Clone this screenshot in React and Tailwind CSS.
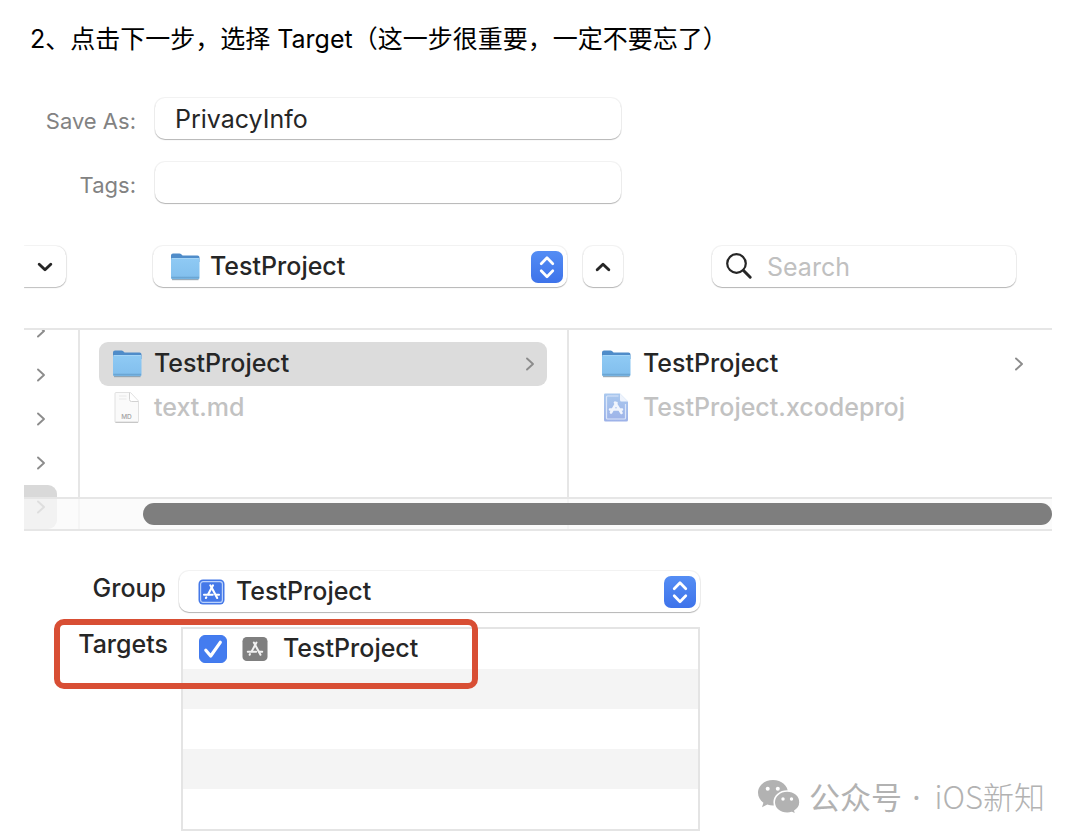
import React, { useState } from "react";

const CONTROL =
  "h-[41px] rounded-[10px] bg-white shadow-[0_0_0_1px_rgba(0,0,0,0.05),0_1px_1px_rgba(0,0,0,0.25)] outline-none";

function FolderIcon() {
  return (
    <svg width="32" height="32" viewBox="0 0 32 32" className="shrink-0" aria-hidden="true">
      <defs>
        <linearGradient id="folderFront" x1="0" y1="0" x2="0" y2="1">
          <stop offset="0" stopColor="#8fcaf4" />
          <stop offset="0.85" stopColor="#83c0ee" />
          <stop offset="1" stopColor="#70acd9" />
        </linearGradient>
      </defs>
      <path d="M2 4.500Q2 2.500 4 2.500h6.500q1 0 1.800 .8l.7 .6q.5 .5 1.400 .5H28.500q2 0 2 2V11H2z" fill="#4f8cc9" />
      <rect x="2" y="7" width="28.500" height="21.500" rx="1.800" fill="url(#folderFront)" />
      <path d="M2.500 7.500h27.500" stroke="#a9d8f8" strokeWidth="0.800" />
      <path d="M2.500 26.300h27.500" stroke="#629cc9" strokeWidth="0.800" />
      <path d="M3 28.700h26.500" stroke="#8b9aa6" strokeWidth="0.900" />
    </svg>
  );
}

function AppGlyph({ stroke = "#fff" }) {
  return (
    <g fill="none" stroke={stroke} strokeWidth="2.100" strokeLinecap="round">
      <path d="M12.300 6.300l1.700 3 5.200 9.700" />
      <path d="M15 6.300l-4.800 8.900" />
      <path d="M6 15.800h8.700M18 15.800h3" />
      <path d="M8.300 18.300l-.4 .7" />
    </g>
  );
}

function ProjectIcon() {
  return (
    <svg width="27" height="26" viewBox="0 0 27 26" className="shrink-0" aria-hidden="true">
      <rect x="0.500" y="0.500" width="26" height="25" rx="4.500" fill="#4478e8" />
      <rect x="2.600" y="2.600" width="21.800" height="20.800" rx="2.500" fill="none" stroke="#bcd3fb" strokeWidth="1.200" />
      <AppGlyph />
    </svg>
  );
}

function TargetIcon() {
  return (
    <svg width="26" height="26" viewBox="0 0 27 26" className="shrink-0" aria-hidden="true">
      <rect x="0.500" y="0.500" width="26" height="25" rx="4.500" fill="#7f7f7f" />
      <AppGlyph stroke="#f2f2f2" />
    </svg>
  );
}

function MarkdownIcon() {
  return (
    <svg width="32" height="32" viewBox="0 0 32 32" className="shrink-0" aria-hidden="true">
      <path d="M5 .5h14.500l8 8.500v20.500q0 1-1 1H5q-1 0-1-1V1.500q0-1 1-1z" fill="#fafafa" stroke="#dedede" strokeWidth="0.900" />
      <path d="M4.500 30.300h22.500" stroke="#c4c4c4" strokeWidth="1.200" />
      <path d="M18.500 .5v7q0 2 2 2h6.700" fill="#fff" stroke="#d2d2d2" strokeWidth="1" />
      <path d="M8 4h7.500M8 7h7.500" stroke="#e3e3e3" strokeWidth="0.800" />
      <text x="15.500" y="26.500" textAnchor="middle" fontSize="6.500" fontWeight="500" fill="#a3a3a3">MD</text>
    </svg>
  );
}

function XcodeIcon() {
  return (
    <svg width="32" height="32" viewBox="0 0 32 32" className="shrink-0" aria-hidden="true">
      <defs>
        <linearGradient id="xcodeFill" x1="0" y1="0" x2="0" y2="1">
          <stop offset="0" stopColor="#a9c8ee" />
          <stop offset="1" stopColor="#9db2e8" />
        </linearGradient>
      </defs>
      <path d="M5 1.500h15l8 8v18.500q0 1.500-1.500 1.500H5.500Q4 29.500 4 28V2.500q0-1 1-1z" fill="url(#xcodeFill)" />
      <path d="M20 1.500V8q0 1.500 1.500 1.500H28z" fill="#eef3fc" />
      <path d="M18.500 4H7.500q-1 0-1 1v21q0 1 1 1h17q1 0 1-1V12" fill="none" stroke="#dbe6f9" strokeWidth="1.200" />
      <g fill="none" stroke="#f1f5fd" strokeWidth="2.600" strokeLinecap="round">
        <path d="M15 10.500l6.500 10.500M16.500 11l-5.500 9.500M10 17.500h12" />
      </g>
    </svg>
  );
}

function Stepper() {
  return (
    <svg width="32" height="32" viewBox="0 0 32 32" className="pointer-events-none shrink-0" aria-hidden="true">
      <defs>
        <linearGradient id="stepperFill" x1="0" y1="0" x2="0" y2="1">
          <stop offset="0" stopColor="#548df4" />
          <stop offset="1" stopColor="#3e73ea" />
        </linearGradient>
      </defs>
      <rect width="32" height="32" rx="7" fill="url(#stepperFill)" />
      <path d="M10.200 12.700L16 6.700l5.800 6M10.200 19.700l5.800 6 5.800-6" fill="none" stroke="#fff" strokeWidth="2.700" strokeLinecap="round" strokeLinejoin="round" />
    </svg>
  );
}

function SmallChevron({ up = false }) {
  return (
    <svg width="16" height="10" viewBox="0 0 16 10" aria-hidden="true">
      <path d={up ? "M2.200 7.800L8 2.200l5.800 5.600" : "M2.200 2.200L8 7.800l5.800-5.600"} fill="none" stroke="#262626" strokeWidth="2.900" strokeLinecap="round" strokeLinejoin="round" />
    </svg>
  );
}

function RowChevron({ color = "#8c8c8c" }) {
  return (
    <svg width="10" height="14" viewBox="0 0 10 14" className="shrink-0" aria-hidden="true">
      <path d="M2 1.500L8 7l-6 5.500" fill="none" stroke={color} strokeWidth="1.900" strokeLinecap="round" strokeLinejoin="round" />
    </svg>
  );
}

function WeChatIcon() {
  return (
    <svg width="44" height="36" viewBox="0 0 44 36" className="shrink-0" aria-hidden="true">
      <path d="M16 1C7.400 1 1 6.700 1 13.800c0 4 2.100 7.500 5.400 9.900L5 28.200l5.300-2.700c1.800 .6 3.600 .9 5.700 .9 8.600 0 15-5.600 15-12.600S24.600 1 16 1z" fill="#b2b2b2" />
      <circle cx="10.700" cy="9.800" r="2" fill="#fff" />
      <circle cx="20.800" cy="9.800" r="2" fill="#fff" />
      <path d="M30.200 12C22.800 12 17.200 17 17.200 23.200s5.600 11 13 11c1.700 0 3.200-.2 4.700-.7l4.100 2-1.100-3.600c3-2 5.100-5.100 5.100-8.700C43 17 37.500 12 30.200 12z" fill="#b2b2b2" stroke="#fff" strokeWidth="1.600" />
      <circle cx="26" cy="20" r="1.700" fill="#fff" />
      <circle cx="34.500" cy="20" r="1.700" fill="#fff" />
    </svg>
  );
}

function PopUp({ id, label, icon, className }) {
  return (
    <div className={`grid items-center ${className}`}>
      <select
        id={id}
        aria-label={label}
        className={`${CONTROL} col-start-1 row-start-1 w-full appearance-none pl-[57px] pb-[2px] font-medium`}
      >
        <option>TestProject</option>
      </select>
      <div className="pointer-events-none col-start-1 row-start-1 flex items-center justify-between pr-1 pl-4">
        <span className="flex w-8 justify-center">{icon}</span>
        <Stepper />
      </div>
    </div>
  );
}

function FileRow({ icon, name, selected, disabled, folder }) {
  return (
    <li>
      <button
        type="button"
        disabled={disabled}
        className={`flex h-11 w-full items-center gap-[11px] rounded-[9px] pr-3 pl-3 text-left font-medium ${
          selected ? "bg-[#dcdcdc]" : ""
        } ${disabled ? "text-[#c2c2c2]" : "text-[#262626]"}`}
      >
        {icon}
        <span className="grow pb-[2px]">{name}</span>
        {folder && <RowChevron />}
      </button>
    </li>
  );
}

export default function App() {
  const [name, setName] = useState("PrivacyInfo");
  const [tags, setTags] = useState("");
  const [query, setQuery] = useState("");
  const [checked, setChecked] = useState(true);

  return (
    <main className="bg-white px-6 pt-6 pb-2 font-['Inter','Noto_Sans_CJK_SC',sans-serif] text-[25px] leading-[30px] text-[#262626]">
      <h1 className="pl-[6px] text-black">2、点击下一步，选择 Target（这一步很重要，一定不要忘了）</h1>

      <form onSubmit={(e) => e.preventDefault()}>
        <div className="mt-11 grid max-w-[597px] grid-cols-[112px_1fr] items-center gap-x-[19px] gap-y-[23px]">
          <label htmlFor="save-as" className="pt-1 text-right text-[22px] whitespace-nowrap text-[#828282]">
            Save As:
          </label>
          <input id="save-as" value={name} onChange={(e) => setName(e.target.value)} className={`${CONTROL} w-full px-5`} />
          <label htmlFor="tags" className="pt-1 text-right text-[22px] text-[#828282]">
            Tags:
          </label>
          <input id="tags" value={tags} onChange={(e) => setTags(e.target.value)} className={`${CONTROL} w-full px-5`} />
        </div>

        <div className="mt-[43px] flex items-center overflow-x-clip">
          <button type="button" aria-label="View options" className="flex h-[41px] w-[42px] shrink-0 items-center justify-center rounded-r-[10px] bg-white shadow-[1px_0_1px_rgba(0,0,0,0.08),0_1px_1px_rgba(0,0,0,0.25),0_-1px_0_rgba(0,0,0,0.04)]">
            <SmallChevron />
          </button>
          <PopUp id="folder" label="Folder" icon={<FolderIcon />} className="ml-[87px] w-[414px]" />
          <button type="button" aria-label="Collapse" className={`${CONTROL} ml-4 flex w-10 shrink-0 items-center justify-center`}>
            <SmallChevron up />
          </button>
          <label className={`${CONTROL} mr-10 ml-auto flex w-[304px] items-center gap-[14px] px-[14px]`}>
            <svg width="27" height="27" viewBox="0 0 27 27" className="shrink-0" aria-hidden="true">
              <circle cx="10.500" cy="10.500" r="9.300" fill="none" stroke="#262626" strokeWidth="2.200" />
              <path d="M17.500 17.500l6.700 6.700" stroke="#262626" strokeWidth="3" strokeLinecap="round" />
            </svg>
            <input
              type="search"
              aria-label="Search"
              placeholder="Search"
              value={query}
              onChange={(e) => setQuery(e.target.value)}
              className="w-full min-w-0 outline-none placeholder:text-[#c0c0c0]"
            />
          </label>
        </div>

        <section className="mt-[41px] mr-1 grid overflow-hidden border-y-2 border-[#e6e6e6]" aria-label="File browser">
          <div className="col-start-1 row-start-1 grid h-[199px] grid-cols-[56px_489px_1fr] overflow-hidden">
            <ul className="-mt-[21px] border-r-2 border-[#e6e6e6]">
              {[0, 1, 2, 3, 4].map((i) => (
                <li key={i} className={`mr-[21px] flex h-11 items-center justify-end pr-[11px] ${i === 4 ? "rounded-r-[9px] bg-[#d9d9d9]" : ""}`}>
                  <RowChevron />
                </li>
              ))}
            </ul>
            <ul className="border-r-2 border-[#e6e6e6] pt-3 pr-5 pl-[19px]">
              <FileRow icon={<FolderIcon />} name="TestProject" selected folder />
              <FileRow icon={<MarkdownIcon />} name="text.md" disabled />
            </ul>
            <ul className="pt-3 pr-4 pl-[19px]">
              <FileRow icon={<FolderIcon />} name="TestProject" folder />
              <FileRow icon={<XcodeIcon />} name="TestProject.xcodeproj" disabled />
            </ul>
          </div>
          <div className="z-10 col-start-1 row-start-1 self-end border-t-2 border-[#e6e6e6] bg-[#fafafa]/75 py-1 pl-[119px]">
            <div className="h-[22px] rounded-full bg-[#7e7e7e]" />
          </div>
        </section>

        <div className="mt-10 flex items-end justify-between">
          <div className="grid w-[676px] grid-cols-[144px_1fr]">
            <label htmlFor="group" className="pt-[2px] pr-[2px] text-right font-medium">
              Group
            </label>
            <PopUp id="group" label="Group" icon={<ProjectIcon />} className="ml-[11px]" />
            <div className="relative col-span-2 mt-[15px] grid grid-cols-[144px_1fr]">
              <div className="pt-[2px] text-right font-medium">Targets</div>
              <ul className="ml-[13px] border-2 border-[#e4e4e4]">
                <li className="h-10">
                  <label className="flex h-full items-center gap-[15px] pl-4">
                    <span className="grid place-items-center">
                      <input
                        type="checkbox"
                        checked={checked}
                        onChange={(e) => setChecked(e.target.checked)}
                        className="col-start-1 row-start-1 size-7 appearance-none rounded-[6px] border border-[#c8c8c8] bg-white checked:border-[#4079ee] checked:bg-[#447cef]"
                      />
                      {checked && (
                        <svg width="28" height="28" viewBox="0 0 28 28" className="pointer-events-none col-start-1 row-start-1" aria-hidden="true">
                          <path d="M6.800 15.300l4.900 5.700L21.300 7.300" fill="none" stroke="#fff" strokeWidth="3.200" strokeLinecap="round" strokeLinejoin="round" />
                        </svg>
                      )}
                    </span>
                    <TargetIcon />
                    <span className="pb-[2px] font-medium">TestProject</span>
                  </label>
                </li>
                <li className="h-10 bg-[#f4f4f4]" />
                <li className="h-10" />
                <li className="h-10 bg-[#f4f4f4]" />
                <li className="h-10" />
              </ul>
              <div className="pointer-events-none absolute -top-2 left-[30px] h-[70px] w-[424px] rounded-[10px] border-[6px] border-[#d84e34]" />
            </div>
          </div>
          <div className="mr-[11px] mb-4 flex items-center gap-2 font-['Noto_Sans','Noto_Sans_CJK_SC',sans-serif] text-[31px] leading-9 whitespace-nowrap text-[#b2b2b2]">
            <WeChatIcon />
            <p>
              公众号 <span className="px-[2px]">·</span>{" "}
              <span className="pl-1 font-['Noto_Sans_CJK_SC',sans-serif] font-light">iOS新知</span>
            </p>
          </div>
        </div>
      </form>
    </main>
  );
}
